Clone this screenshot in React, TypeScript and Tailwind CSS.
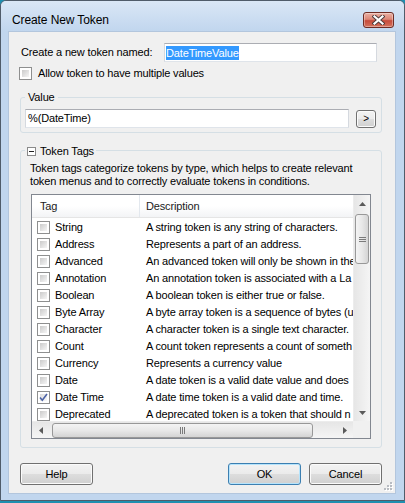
import React from 'react';

const rows = [
    { tag: 'String', desc: 'A string token is any string of characters.' },
    { tag: 'Address', desc: 'Represents a part of an address.' },
    { tag: 'Advanced', desc: 'An advanced token will only be shown in the' },
    { tag: 'Annotation', desc: 'An annotation token is associated with a La' },
    { tag: 'Boolean', desc: 'A boolean token is either true or false.' },
    { tag: 'Byte Array', desc: 'A byte array token is a sequence of bytes (u' },
    { tag: 'Character', desc: 'A character token is a single text character.' },
    { tag: 'Count', desc: 'A count token represents a count of someth' },
    { tag: 'Currency', desc: 'Represents a currency value' },
    { tag: 'Date', desc: 'A date token is a valid date value and does' },
    { tag: 'Date Time', desc: 'A date time token is a valid date and time.', checked: true },
    { tag: 'Deprecated', desc: 'A deprecated token is a token that should n' },
];

const CheckBox = ({ checked = false }: { checked?: boolean }) => (
    <div className="relative w-[13px] h-[13px] shrink-0 border border-[#8e8f8f] bg-white p-[2px]">
        <div className={checked ? 'w-full h-full bg-gradient-to-br from-[#dcdcdc] to-[#f8f8f8]' : 'w-full h-full bg-gradient-to-br from-[#cbcbcb] to-[#f6f6f6]'} />
        {checked && (
            <svg className="absolute left-0 top-0" width="11" height="11" viewBox="0 0 11 11">
                <path d="M2 5.5 L4.3 8.2 L9 2" fill="none" stroke="#4d63a6" strokeWidth={1.6} />
            </svg>
        )}
    </div>
);

const Arrow = ({ dir }: { dir: 'up' | 'down' | 'left' | 'right' }) => {
    const pts: Record<string, string> = {
        up: '0,4 3.5,0 7,4',
        down: '0,0 7,0 3.5,4',
        left: '4,0 4,7 0,3.5',
        right: '0,0 4,3.5 0,7',
    };
    const vertical = dir === 'up' || dir === 'down';
    return (
        <svg width={vertical ? 7 : 4} height={vertical ? 4 : 7} viewBox={vertical ? '0 0 7 4' : '0 0 4 7'}>
            <polygon points={pts[dir]} fill="#5a5a5a" />
        </svg>
    );
};

const WinButton = ({ label, primary = false }: { label: string; primary?: boolean }) => (
    <div
        className={
            'w-[73px] h-[22px] rounded-[3px] border flex items-center justify-center bg-[linear-gradient(to_bottom,#f3f3f3_0%,#ebebeb_48%,#dddddd_52%,#d0d0d0_100%)] ' +
            (primary ? 'border-[#3c7fb1] shadow-[inset_0_0_0_1px_#b6e4fc]' : 'border-[#707070] shadow-[inset_0_0_0_1px_#fbfbfb]')
        }
    >
        {label}
    </div>
);

const VScroll = () => (
    <div className="w-[17px] flex flex-col bg-gradient-to-r from-[#e6e6e6] to-[#f5f5f5] border-l border-[#ececec]">
        <div className="h-[17px] flex items-center justify-center">
            <Arrow dir="up" />
        </div>
        <div className="mt-[2px] mx-[1px] h-[50px] rounded-[3px] border border-[#989898] bg-gradient-to-r from-[#f4f4f4] via-[#e8e8e8] to-[#d4d4d4] flex flex-col items-center justify-center gap-[1px]">
            <div className="w-[7px] h-[1px] bg-[#7a7a7a]" />
            <div className="w-[7px] h-[1px] bg-[#7a7a7a]" />
            <div className="w-[7px] h-[1px] bg-[#7a7a7a]" />
        </div>
        <div className="flex-1" />
        <div className="h-[17px] flex items-center justify-center">
            <Arrow dir="down" />
        </div>
    </div>
);

const HScroll = () => (
    <div className="w-[321px] h-[17px] flex items-center bg-gradient-to-b from-[#e6e6e6] to-[#f5f5f5] border-t border-[#ececec]">
        <div className="w-[17px] h-full flex items-center justify-center">
            <Arrow dir="left" />
        </div>
        <div className="ml-[3px] w-[261px] h-[15px] rounded-[3px] border border-[#989898] bg-gradient-to-b from-[#f4f4f4] via-[#e8e8e8] to-[#d4d4d4] flex items-center justify-center gap-[1px]">
            <div className="w-[1px] h-[7px] bg-[#7a7a7a]" />
            <div className="w-[1px] h-[7px] bg-[#7a7a7a]" />
            <div className="w-[1px] h-[7px] bg-[#7a7a7a]" />
        </div>
        <div className="flex-1" />
        <div className="w-[17px] h-full flex items-center justify-center">
            <Arrow dir="right" />
        </div>
    </div>
);

const CloseButton = () => (
    <div className="w-[31px] h-[16px] rounded-[3px] border border-[#6e2c24] bg-[linear-gradient(to_bottom,#eab0a3_0%,#dc8676_45%,#c64b3b_55%,#d4725c_100%)] shadow-[inset_0_0_0_1px_rgba(255,255,255,0.35)] flex items-center justify-center">
        <svg width="13" height="10" viewBox="0 0 13 10">
            <path d="M2.5 1.5 L10.5 8.5 M10.5 1.5 L2.5 8.5" stroke="#4a3a3a" strokeWidth={4} strokeLinecap="square" />
            <path d="M2.5 1.5 L10.5 8.5 M10.5 1.5 L2.5 8.5" stroke="#ffffff" strokeWidth={2.2} strokeLinecap="square" />
        </svg>
    </div>
);

export default function App() {
    return (
        <div className="w-[405px] h-[503px] bg-[#1f8fb0] font-['Liberation_Sans',Arial,sans-serif] text-[11px] leading-[13px] tracking-[-0.15px] text-black">
            <div className="w-[405px] h-[501px] rounded-t-[6px] border border-[#505c6a] bg-[#c1d6ee] flex flex-col">
                {/* Title bar */}
                <div className="h-[30px] pt-[8px] pl-[11px] pr-[10px] flex items-center justify-between rounded-t-[5px] bg-gradient-to-b from-[#dae7f6] to-[#c1d6ee]">
                    <span className="text-[12px] leading-[14px] tracking-[-0.1px]">Create New Token</span>
                    <CloseButton />
                </div>

                {/* Client area */}
                <div className="pl-[7px]">
                    <div className="relative w-[388px] h-[463px] bg-[#f0f0f0] border border-[#b3c6dd] flex flex-col">
                        <div className="mt-[11px] pl-[12px] h-[19px] flex items-center">
                            <span className="w-[143px]">Create a new token named:</span>
                            <div className="w-[213px] h-[19px] border border-[#abadb3] border-b-[#dfe4ea] border-x-[#d5d9df] bg-white flex items-center pl-[1px]">
                                <span className="bg-[#3399ff] text-white leading-[14px]">DateTimeValue</span>
                            </div>
                        </div>

                        <div className="mt-[5px] pl-[10px] h-[13px] flex items-center">
                            <CheckBox />
                            <span className="ml-[6px]">Allow token to have multiple values</span>
                        </div>

                        {/* Value group */}
                        <fieldset className="mt-[11px] ml-[11px] w-[362px] min-w-0 rounded-[3px] border border-[#d5dfe5] pt-[5px] pb-[4px] pl-[4px] pr-[5px]">
                            <legend className="px-[3px] leading-[13px]">Value</legend>
                            <div className="flex items-center">
                                <div className="w-[325px] h-[19px] border border-[#abadb3] border-b-[#dfe4ea] border-x-[#d5d9df] bg-white flex items-center pl-[2px]">
                                    %(DateTime)
                                </div>
                                <div className="ml-[7px] w-[20px] h-[18px] rounded-[3px] border border-[#707070] shadow-[inset_0_0_0_1px_#fbfbfb] bg-[linear-gradient(to_bottom,#f3f3f3_0%,#ebebeb_48%,#dddddd_52%,#d0d0d0_100%)] flex items-center justify-center text-[10px]">
                                    &gt;
                                </div>
                            </div>
                        </fieldset>

                        {/* Token Tags group */}
                        <fieldset className="mt-[9px] ml-[11px] w-[362px] min-w-0 rounded-[3px] border border-[#d5dfe5] pb-[8px] pl-[4px]">
                            <legend className="px-[2px] leading-[13px]">
                                <span className="inline-flex items-center">
                                    <span className="w-[9px] h-[9px] border border-[#8a8a8a] bg-white flex items-center justify-center">
                                        <span className="w-[5px] h-[1px] bg-[#202020]" />
                                    </span>
                                    <span className="ml-[4px]">Token Tags</span>
                                </span>
                            </legend>
                            <p className="mt-[4px] ml-[5px] leading-[13px]">
                                Token tags categorize tokens by type, which helps to create relevant
                                <br />
                                token menus and to correctly evaluate tokens in conditions.
                            </p>

                            {/* List view */}
                            <div className="mt-[6px] ml-[6px] w-[340px] border border-[#828790] bg-white flex flex-col">
                                <div className="flex h-[226px]">
                                    <div className="w-[321px] overflow-hidden">
                                        <div className="h-[23px] flex bg-gradient-to-b from-white via-white to-[#f3f4f6] border-b border-[#e5e5e5]">
                                            <div className="w-[108px] pl-[8px] border-r border-[#e3e8ee] flex items-center text-[#1b1b1b]">Tag</div>
                                            <div className="pl-[6px] flex items-center text-[#1b1b1b]">Description</div>
                                        </div>
                                        <div className="pt-[1px]">
                                            {rows.map((r) => (
                                                <div key={r.tag} className="h-[17px] flex items-center whitespace-nowrap">
                                                    <div className="w-[108px] pl-[5px] flex items-center shrink-0">
                                                        <CheckBox checked={r.checked} />
                                                        <span className="ml-[5px]">{r.tag}</span>
                                                    </div>
                                                    <div className="pl-[6px]">{r.desc}</div>
                                                </div>
                                            ))}
                                        </div>
                                    </div>
                                    <VScroll />
                                </div>
                                <div className="flex h-[17px]">
                                    <HScroll />
                                    <div className="w-[17px] bg-[#f0f0f0]" />
                                </div>
                            </div>
                        </fieldset>

                        {/* Buttons */}
                        <div className="mt-[15px] ml-[11px] w-[362px] flex items-center justify-between">
                            <WinButton label="Help" />
                            <div className="flex gap-[8px]">
                                <WinButton label="OK" primary />
                                <WinButton label="Cancel" />
                            </div>
                        </div>

                        {/* Resize grip */}
                        <svg className="absolute right-[2px] bottom-[2px]" width="10" height="10" viewBox="0 0 10 10">
                            {[[7, 1], [4, 4], [7, 4], [1, 7], [4, 7], [7, 7]].map(([x, y]) => (
                                <g key={`${x}-${y}`}>
                                    <rect x={x + 1} y={y + 1} width="2" height="2" fill="#ffffff" />
                                    <rect x={x} y={y} width="2" height="2" fill="#b8bcc2" />
                                </g>
                            ))}
                        </svg>
                    </div>
                </div>
            </div>
        </div>
    );
}
